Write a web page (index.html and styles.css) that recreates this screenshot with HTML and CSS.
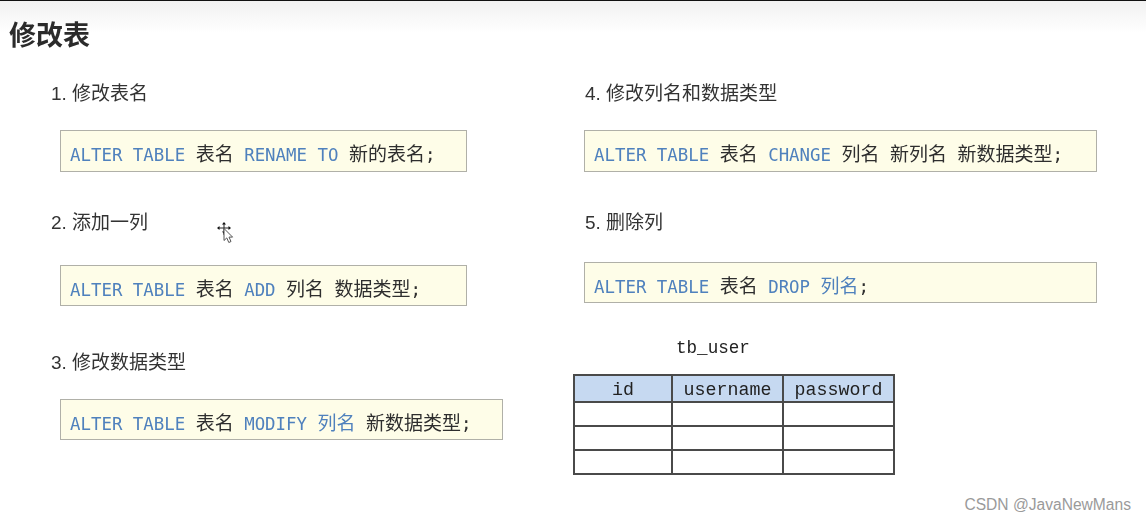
FILE: index.html
```html
<!DOCTYPE html>
<html lang="zh-CN">
<head>
<meta charset="utf-8">
<title>修改表</title>
<link rel="stylesheet" href="styles.css">
</head>
<body>
<main class="page">
  <h1 class="title">修改表</h1>
  <div class="columns">
    <section class="col col-left">
      <div class="item item-1">
        <h2 class="label">1. 修改表名</h2>
        <div class="code w-407"><span class="kw">ALTER TABLE</span> <span class="zh">表名</span> <span class="kw">RENAME TO</span> <span class="zh">新的表名</span>;</div>
      </div>
      <div class="item item-2">
        <h2 class="label">2. 添加一列</h2>
        <div class="code w-407 gap-2"><span class="kw">ALTER TABLE</span> <span class="zh">表名</span> <span class="kw">ADD</span> <span class="zh">列名</span> <span class="zh">数据类型</span>;</div>
      </div>
      <div class="item item-3">
        <h2 class="label">3. 修改数据类型</h2>
        <div class="code w-443"><span class="kw">ALTER TABLE</span> <span class="zh">表名</span> <span class="kw">MODIFY <span class="zh">列名</span></span> <span class="zh">新数据类型</span>;</div>
      </div>
    </section>
    <section class="col col-right">
      <div class="item item-1">
        <h2 class="label">4. 修改列名和数据类型</h2>
        <div class="code w-513"><span class="kw">ALTER TABLE</span> <span class="zh">表名</span> <span class="kw">CHANGE</span> <span class="zh">列名</span> <span class="zh">新列名</span> <span class="zh">新数据类型</span>;</div>
      </div>
      <div class="item item-2">
        <h2 class="label">5. 删除列</h2>
        <div class="code w-513 gap-5"><span class="kw">ALTER TABLE</span> <span class="zh">表名</span> <span class="kw">DROP <span class="zh">列名</span></span>;</div>
      </div>
      <div class="user-table">
        <div class="caption">tb_user</div>
        <table class="grid">
          <colgroup><col class="c1"><col class="c2"><col class="c3"></colgroup>
          <thead><tr><th>id</th><th>username</th><th>password</th></tr></thead>
          <tbody>
            <tr><td></td><td></td><td></td></tr>
            <tr><td></td><td></td><td></td></tr>
            <tr><td></td><td></td><td></td></tr>
          </tbody>
        </table>
      </div>
    </section>
  </div>
</main>
<svg class="cursor" width="18" height="24" viewBox="0 0 18 24" aria-hidden="true">
  <path d="M8 1v12M3 6h10" stroke="#222" stroke-width="1" fill="none"/>
  <path d="M8 0l-2 2.5h4zM8 12l-2-2.5h4zM1 6l2.5-2v4zM15 6l-2.5-2v4z" fill="#111"/>
  <path d="M8 6.5v12l2.8-2.6 2 4.6 2.2-1-2-4.4h3.6z" fill="#fff" stroke="#555" stroke-width="1"/>
</svg>
<div class="watermark">CSDN @JavaNewMans</div>
</body>
</html>
```
FILE: styles.css
```css
* { box-sizing: border-box; }
html, body { margin: 0; padding: 0; }
body {
  width: 1146px;
  height: 520px;
  overflow: hidden;
  position: relative;
  background: #fff;
  font-family: "Liberation Sans", "Noto Sans CJK SC", sans-serif;
  color: #333;
}
.page {
  height: 520px;
  border-top: 1px solid #111;
  background: linear-gradient(#f1f1f1 0, #fff 32px);
  padding: 17px 0 0 9px;
  filter: blur(0.3px);
}
.title {
  margin: 0;
  font-size: 27px;
  line-height: 36px;
  font-weight: 700;
  color: #2b2b2b;
}
.columns { display: flex; margin-top: 27px; }
.col { display: flex; flex-direction: column; }
.col-left { width: 575px; padding-left: 42px; }
.label {
  margin: 0;
  font-size: 19px;
  line-height: 26px;
  font-weight: 400;
  color: #333;
}
.col-right .label { margin-left: 1px; }
.col-right .code { margin-left: 0; }
.item-2 { margin-top: 38px; }
.item-3 { margin-top: 44px; }
.code {
  height: 42px;
  margin: 23px 0 0 9px;
  padding: 11px 0 0 9px;
  border: 1px solid #b0b0a8;
  background: #fefde8;
  font-family: "DejaVu Sans Mono", "Noto Sans CJK SC", monospace;
  font-size: 17.4px;
  line-height: 22px;
  color: #2e2e2e;
  white-space: pre-wrap;
}
.zh { font-family: "Noto Sans CJK SC", sans-serif; font-size: 19px; }
.gap-2 { margin-top: 29px; height: 41px; }
.gap-5 { margin-top: 26px; height: 41px; }
.item-3 .code { height: 41px; }
.w-407 { width: 407px; }
.w-443 { width: 443px; }
.w-513 { width: 513px; }
.kw { color: #4f81bd; }
.user-table { margin-top: 34px; margin-left: -11px; }
.caption {
  margin-left: 103px;
  font-family: "Liberation Mono", monospace;
  font-size: 17.6px;
  line-height: 22px;
  color: #222;
}
.grid {
  margin-top: 15px;
  width: 320px;
  border-collapse: collapse;
  table-layout: fixed;
  font-family: "Liberation Mono", monospace;
}
.c1 { width: 98px; }
.c2 { width: 111px; }
.c3 { width: 111px; }
.grid th, .grid td { border: 2px solid #4a4a4a; padding: 0; }
.grid th {
  height: 27px;
  padding-top: 2px;
  background: #c6d9f1;
  font-size: 18.3px;
  line-height: 22px;
  font-weight: 400;
  color: #222;
}
.grid td { height: 24px; background: #fff; }
.cursor { position: absolute; left: 216px; top: 222px; }
.watermark {
  position: absolute;
  right: 15px;
  top: 495px;
  font-size: 15.6px;
  line-height: 20px;
  color: #9a9a9a;
}
```
